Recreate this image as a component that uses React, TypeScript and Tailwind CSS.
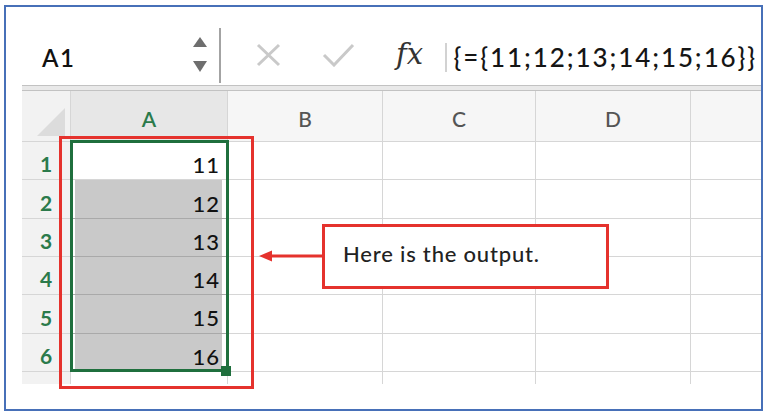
import React from "react";

const GRID = "border-[#d6d6d6]";

function ColHeader({ w, label, active }: { w: string; label: string; active?: boolean }) {
  return (
    <div
      className={`${w} shrink-0 h-full border-r ${GRID} flex items-center justify-center pt-[6px] text-[21px] ${
        active ? "bg-[#e7e7e7] text-[#2b7a4b] font-semibold" : "bg-[#f6f6f6] text-[#555] font-medium"
      }`}
    >
      {label}
    </div>
  );
}

function Row({ n, value, shaded, last }: { n: number; value: number; shaded: boolean; last?: boolean }) {
  const sep = shaded && !last ? "border-[#a9a9a9]" : GRID;
  return (
    <div className="flex h-[38.33px] shrink-0">
      <div className={`w-[49px] shrink-0 bg-[#f2f2f2] border-r border-b ${GRID} flex items-center justify-center pt-[7px] text-[21px] font-bold text-[#2b7a4b]`}>
        {n}
      </div>
      <div className={`w-[157px] shrink-0 border-r border-b ${sep} flex`}>
        <div
          className={`ml-[4px] mr-[5px] flex-1 flex items-center justify-end pr-[2px] pt-[8px] text-[22px] tracking-[1px] font-medium text-[#111] ${
            shaded ? "bg-[#c9c9c9]" : "bg-white"
          }`}
        >
          {value}
        </div>
      </div>
      <div className={`w-[155px] shrink-0 border-r border-b ${GRID}`} />
      <div className={`w-[153px] shrink-0 border-r border-b ${GRID}`} />
      <div className={`w-[155px] shrink-0 border-r border-b ${GRID}`} />
      <div className={`flex-1 border-b ${GRID}`} />
    </div>
  );
}

export default function App() {
  const values = [11, 12, 13, 14, 15, 16];
  return (
    <div className="relative w-[768px] h-[416px] bg-white overflow-hidden pt-[5px] pl-[4px] font-['Lato','Open_Sans',sans-serif]">
      <div className="w-[759px] h-[406px] border-2 border-[#4770b8] flex flex-col overflow-hidden">
        {/* Formula bar */}
        <div className="h-[78px] shrink-0 flex items-start pl-[36px]">
          <div className="w-[150px] shrink-0 mt-[39px] text-[24px] leading-none text-[#111] font-semibold tracking-[1.5px]">
            A1
          </div>
          <svg className="mt-[30px] shrink-0" width="16" height="36" viewBox="0 0 16 36">
            <polygon points="8,0 15,10 1,10" fill="#6e6e6e" />
            <polygon points="1,24 15,24 8,35" fill="#6e6e6e" />
          </svg>
          <div className="ml-[11px] mt-[21px] w-[2px] h-[55px] bg-[#a3a3a3] shrink-0" />
          <svg className="ml-[34px] mt-[36px] shrink-0" width="27" height="24" viewBox="0 0 27 24">
            <path d="M3 2 L24 22 M24 2 L3 22" stroke="#c9c9c9" strokeWidth="3" fill="none" />
          </svg>
          <svg className="ml-[40px] mt-[36px] shrink-0" width="33" height="24" viewBox="0 0 33 24">
            <path d="M2 12 L12 22 L31 2" stroke="#c9c9c9" strokeWidth="3" fill="none" />
          </svg>
          <div className="ml-[41px] mt-[33px] shrink-0 w-[32px] text-[29px] leading-none italic text-[#333] font-['DejaVu_Serif',serif]">
            fx
          </div>
          <div className="ml-[17px] mt-[36px] w-[1.5px] h-[29px] bg-[#d2d2d2] shrink-0" />
          <div className="ml-[7px] mt-[37px] shrink-0 whitespace-nowrap text-[26px] leading-none font-medium text-[#151515] tracking-[1.9px]">
            {"{={11;12;13;14;15;16}}"}
          </div>
        </div>

        {/* double separator */}
        <div className="ml-[16px] h-[6px] shrink-0 border-y border-[#c2c2c2] bg-[#e9e9e9]" />

        {/* grid */}
        <div className="ml-[16px] flex flex-col">
          <div className={`flex h-[51px] shrink-0 border-b ${GRID}`}>
            <div className={`w-[49px] shrink-0 h-full bg-[#f2f2f2] border-r ${GRID} flex items-end justify-end pr-[5px] pb-[5px]`}>
              <svg width="28" height="28" viewBox="0 0 28 28">
                <polygon points="0,28 28,0 28,28" fill="#dcdcdc" />
              </svg>
            </div>
            <ColHeader w="w-[157px]" label="A" active />
            <ColHeader w="w-[155px]" label="B" />
            <ColHeader w="w-[153px]" label="C" />
            <ColHeader w="w-[155px]" label="D" />
            <div className="flex-1 h-full bg-[#f6f6f6]" />
          </div>
          {values.map((v, i) => (
            <Row key={v} n={i + 1} value={v} shaded={i > 0} last={i === values.length - 1} />
          ))}
          <div className="flex h-[12px] shrink-0 overflow-hidden">
            <div className={`w-[49px] shrink-0 bg-[#f2f2f2] border-r ${GRID} flex justify-center text-[21px] leading-none font-semibold text-[#8a8a8a] pt-[9px]`}>
              7
            </div>
            <div className={`w-[157px] shrink-0 border-r ${GRID}`} />
            <div className={`w-[155px] shrink-0 border-r ${GRID}`} />
            <div className={`w-[153px] shrink-0 border-r ${GRID}`} />
            <div className={`w-[155px] shrink-0 border-r ${GRID}`} />
            <div className="flex-1" />
          </div>
        </div>
      </div>

      {/* selection border */}
      <div className="absolute left-[70px] top-[140px] w-[159px] h-[232px] border-[3px] border-[#1f6f3d]" />
      <div className="absolute left-[221px] top-[366px] w-[10px] h-[10px] bg-[#1f6f3d]" />

      {/* red highlight box */}
      <div className="absolute left-[59px] top-[136px] w-[195px] h-[253px] border-[3px] border-[#e5322d]" />

      {/* arrow */}
      <svg className="absolute left-[258px] top-[248px]" width="66" height="16" viewBox="0 0 66 16">
        <line x1="10" y1="8" x2="66" y2="8" stroke="#e5322d" strokeWidth="3" />
        <polygon points="1,8 14,2.5 14,13.5" fill="#e5322d" />
      </svg>

      {/* callout */}
      <div className="absolute left-[322px] top-[224px] w-[287px] h-[65px] border-[3px] border-[#e5322d] bg-white flex items-center pl-[18px] pb-[7px] text-[22px] tracking-[0.8px] font-medium text-[#222]">
        Here is the output.
      </div>
    </div>
  );
}
